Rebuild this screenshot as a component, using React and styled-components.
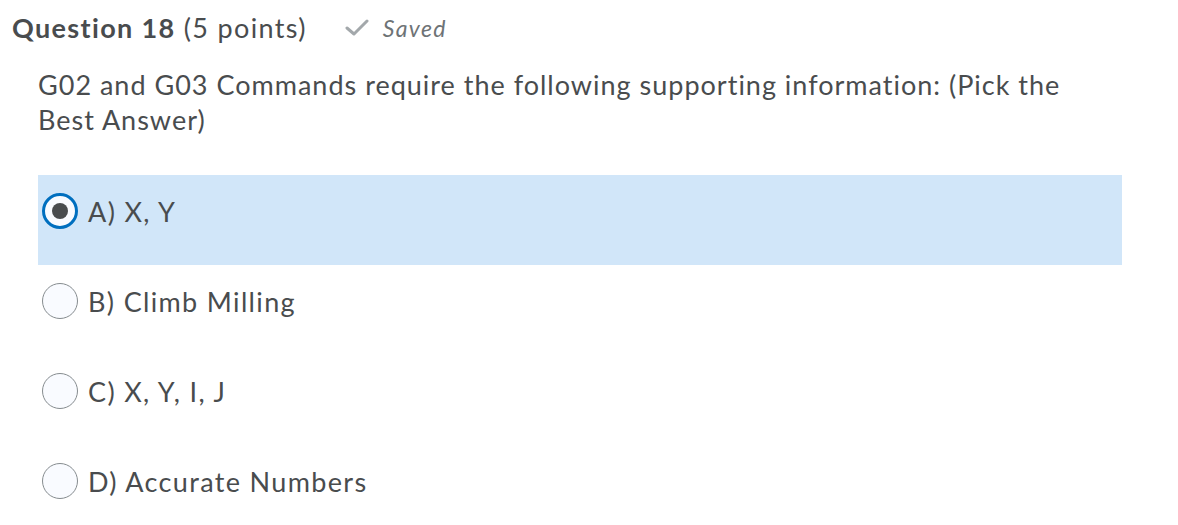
import { createGlobalStyle, styled } from 'styled-components';

const GlobalStyle = createGlobalStyle`
  body {
    margin: 0;
    background: #ffffff;
    font-family: Lato, "Noto Sans", sans-serif;
    color: #494c4e;
  }
`;

const Page = styled.div`
  width: 1178px;
  height: 525px;
  overflow: hidden;
  padding: 10px 0 0 12px;
  box-sizing: border-box;
  letter-spacing: 1.35px;
`;

const Header = styled.div`
  display: flex;
  align-items: center;
  height: 36px;
`;

const Title = styled.h2`
  margin: 0;
  font-size: 27px;
  font-weight: 400;
  line-height: 36px;
  color: #494c4e;
  b {
    font-weight: 700;
  }
`;

const SavedWrap = styled.div`
  display: flex;
  align-items: center;
  gap: 14px;
  margin-left: 38px;
  font-size: 23px;
  font-style: italic;
  letter-spacing: 1.3px;
  color: #6e7376;
`;

const Body = styled.div`
  padding-left: 26px;
  width: 1084px;
`;

const Prompt = styled.p`
  margin: 21px 0 0;
  font-size: 27px;
  line-height: 35px;
  letter-spacing: 1px;
  color: #494c4e;
`;

const Options = styled.div`
  display: flex;
  flex-direction: column;
  margin-top: 38px;
`;

const OptionRow = styled.label`
  display: flex;
  align-items: center;
  gap: 10px;
  height: 90px;
  box-sizing: border-box;
  padding: 18px 0 36px 4px;
  background: ${(p) => (p.$selected ? '#d1e6f9' : 'transparent')};
  font-size: 27px;
  color: #494c4e;
`;

const Radio = styled.span`
  width: 36px;
  height: 36px;
  box-sizing: border-box;
  border-radius: 50%;
  flex-shrink: 0;
  display: flex;
  align-items: center;
  justify-content: center;
  background: #f9fbff;
  border: ${(p) => (p.$checked ? '3px solid #006fbf' : '1.5px solid #868c8f')};
`;

const Dot = styled.span`
  width: 16px;
  height: 16px;
  border-radius: 50%;
  background: #494c4e;
`;

function Check() {
  return (
    <svg width="24" height="18" viewBox="0 0 24 18">
      <polyline points="2,9 9,15 22,2" fill="none" stroke="#a3a8ab" strokeWidth="3" strokeLinecap="round" strokeLinejoin="round" />
    </svg>
  );
}

const options = ['A) X, Y', 'B) Climb Milling', 'C) X, Y, I, J', 'D) Accurate Numbers'];

export default function App() {
  return (
    <Page>
      <GlobalStyle />
      <Header>
        <Title>
          <b>Question 18</b> (5 points)
        </Title>
        <SavedWrap>
          <Check />
          Saved
        </SavedWrap>
      </Header>
      <Body>
        <Prompt>G02 and G03 Commands require the following supporting information: (Pick the Best Answer)</Prompt>
        <Options>
          {options.map((o, i) => (
            <OptionRow key={o} $selected={i === 0}>
              <Radio $checked={i === 0}>{i === 0 && <Dot />}</Radio>
              {o}
            </OptionRow>
          ))}
        </Options>
      </Body>
    </Page>
  );
}
